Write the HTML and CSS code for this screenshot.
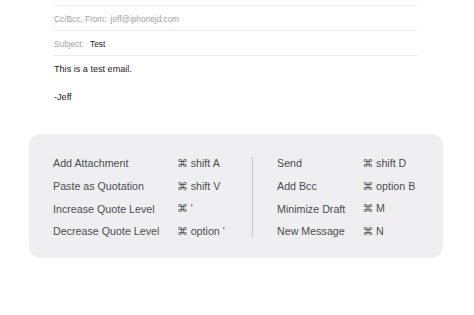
FILE: index.html
```html
<!DOCTYPE html>
<html>
<head>
<meta charset="utf-8">
<link rel="stylesheet" href="styles.css">
</head>
<body>
<div class="compose">
  <div class="field field-from">
    <span class="label">Cc/Bcc, From:</span>
    <span class="muted">jeff@iphonejd.com</span>
  </div>
  <div class="field field-subject">
    <span class="label">Subject:</span>
    <span class="value">Test</span>
  </div>
  <div class="message">
    <div>This is a test email.</div>
    <div>&nbsp;</div>
    <div>-Jeff</div>
  </div>
</div>
<div class="panel">
  <div class="group">
    <span>Add Attachment</span><span>⌘ shift A</span>
    <span>Paste as Quotation</span><span>⌘ shift V</span>
    <span>Increase Quote Level</span><span>⌘ '</span>
    <span>Decrease Quote Level</span><span>⌘ option '</span>
  </div>
  <div class="divider"></div>
  <div class="group group-right">
    <span>Send</span><span>⌘ shift D</span>
    <span>Add Bcc</span><span>⌘ option B</span>
    <span>Minimize Draft</span><span>⌘ M</span>
    <span>New Message</span><span>⌘ N</span>
  </div>
</div>
</body>
</html>
```

FILE: styles.css
```css
html, body {
  margin: 0;
  padding: 0;
  background: #ffffff;
}
body {
  font-family: "Liberation Sans", Arial, "DejaVu Sans", sans-serif;
  width: 474px;
  height: 315px;
  overflow: hidden;
}
.compose {
  margin: 0 57px 0 53px;
  padding-top: 5px;
}
.field {
  box-sizing: border-box;
  display: flex;
  align-items: center;
  border-top: 1px solid #ececec;
  font-size: 8.3px;
  padding: 1px 0 0 1px;
}
.field-from {
  height: 25px;
}
.field-subject {
  height: 26px;
  border-bottom: 1px solid #ececec;
}
.label {
  color: #a0a0a4;
  margin-right: 4px;
}
.field-subject .label {
  margin-right: 6px;
}
.muted {
  color: #a0a0a4;
}
.value {
  color: #1e1e1e;
}
.message {
  padding: 6px 0 0 1px;
  font-size: 9.1px;
  line-height: 14px;
  color: #1a1a1a;
}
.panel {
  margin: 30px 31px 0 29px;
  height: 124px;
  box-sizing: border-box;
  background: #efeff1;
  border-radius: 12px;
  padding: 18px 24px 15px 24px;
  display: flex;
  color: #4c4c51;
  font-size: 10.7px;
}
.group {
  display: grid;
  grid-template-columns: 124px auto;
  grid-auto-rows: 22.7px;
  align-items: center;
  width: 199px;
}
.group-right {
  grid-template-columns: 85.4px auto;
  padding-left: 24px;
  width: auto;
}
.divider {
  width: 1px;
  background: #c6c6ca;
  margin: 5px 0 6px 0;
}
```
